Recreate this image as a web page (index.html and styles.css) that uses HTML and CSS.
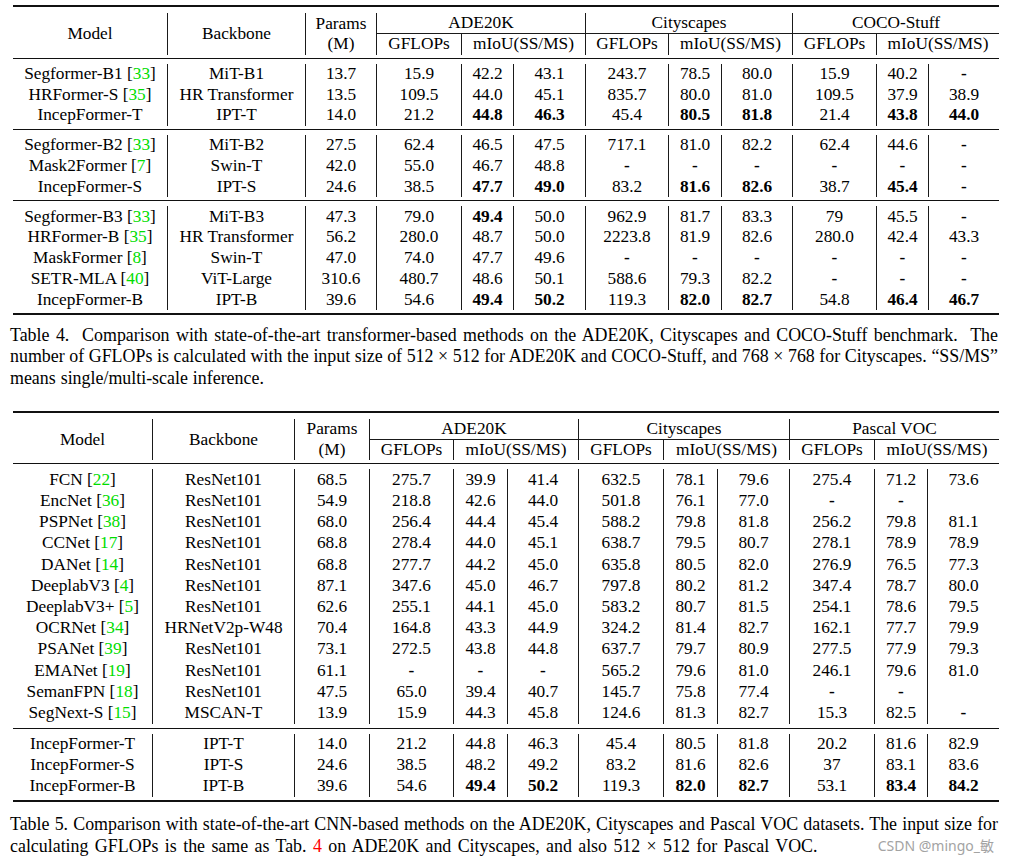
FILE: index.html
```html
<!DOCTYPE html>
<html lang="en">
<head>
<meta charset="utf-8">
<title>IncepFormer comparison tables</title>
<link rel="stylesheet" href="styles.css">
</head>
<body>
<div class="page">

<table class="tbl t4">
  <colgroup>
    <col class="c1"><col class="c2"><col class="c3"><col class="c4"><col class="c5"><col class="c6">
    <col class="c7"><col class="c8"><col class="c9"><col class="c10"><col class="c11"><col class="c12">
  </colgroup>
  <tbody>
    <tr class="rule top"><td colspan="12"><div class="ln thick"></div></td></tr>
    <tr class="hr">
      <th class="first" rowspan="2">Model</th>
      <th rowspan="2">Backbone</th>
      <th>Params</th>
      <th class="grp" colspan="3">ADE20K</th>
      <th class="grp" colspan="3">Cityscapes</th>
      <th class="grp" colspan="3">COCO-Stuff</th>
    </tr>
    <tr class="hr">
      <th>(M)</th>
      <th>GFLOPs</th><th colspan="2">mIoU(SS/MS)</th>
      <th>GFLOPs</th><th colspan="2">mIoU(SS/MS)</th>
      <th>GFLOPs</th><th colspan="2">mIoU(SS/MS)</th>
    </tr>
    <tr class="rule mid"><td colspan="12"><div class="ln"></div></td></tr>

    <tr class="r"><td class="first">Segformer-B1 [<span class="ref">33</span>]</td><td>MiT-B1</td><td>13.7</td><td>15.9</td><td>42.2</td><td>43.1</td><td>243.7</td><td>78.5</td><td>80.0</td><td>15.9</td><td>40.2</td><td class="d">-</td></tr>
    <tr class="r"><td class="first">HRFormer-S [<span class="ref">35</span>]</td><td>HR Transformer</td><td>13.5</td><td>109.5</td><td>44.0</td><td>45.1</td><td>835.7</td><td>80.0</td><td>81.0</td><td>109.5</td><td>37.9</td><td>38.9</td></tr>
    <tr class="r"><td class="first">IncepFormer-T</td><td>IPT-T</td><td>14.0</td><td>21.2</td><td class="b">44.8</td><td class="b">46.3</td><td>45.4</td><td class="b">80.5</td><td class="b">81.8</td><td>21.4</td><td class="b">43.8</td><td class="b">44.0</td></tr>
    <tr class="rule mid"><td colspan="12"><div class="ln"></div></td></tr>

    <tr class="r"><td class="first">Segformer-B2 [<span class="ref">33</span>]</td><td>MiT-B2</td><td>27.5</td><td>62.4</td><td>46.5</td><td>47.5</td><td>717.1</td><td>81.0</td><td>82.2</td><td>62.4</td><td>44.6</td><td class="d">-</td></tr>
    <tr class="r"><td class="first">Mask2Former [<span class="ref">7</span>]</td><td>Swin-T</td><td>42.0</td><td>55.0</td><td>46.7</td><td>48.8</td><td class="d">-</td><td class="d">-</td><td class="d">-</td><td class="d">-</td><td class="d">-</td><td class="d">-</td></tr>
    <tr class="r"><td class="first">IncepFormer-S</td><td>IPT-S</td><td>24.6</td><td>38.5</td><td class="b">47.7</td><td class="b">49.0</td><td>83.2</td><td class="b">81.6</td><td class="b">82.6</td><td>38.7</td><td class="b">45.4</td><td class="d">-</td></tr>
    <tr class="rule mid"><td colspan="12"><div class="ln"></div></td></tr>

    <tr class="r"><td class="first">Segformer-B3 [<span class="ref">33</span>]</td><td>MiT-B3</td><td>47.3</td><td>79.0</td><td class="b">49.4</td><td>50.0</td><td>962.9</td><td>81.7</td><td>83.3</td><td>79</td><td>45.5</td><td class="d">-</td></tr>
    <tr class="r"><td class="first">HRFormer-B [<span class="ref">35</span>]</td><td>HR Transformer</td><td>56.2</td><td>280.0</td><td>48.7</td><td>50.0</td><td>2223.8</td><td>81.9</td><td>82.6</td><td>280.0</td><td>42.4</td><td>43.3</td></tr>
    <tr class="r"><td class="first">MaskFormer [<span class="ref">8</span>]</td><td>Swin-T</td><td>47.0</td><td>74.0</td><td>47.7</td><td>49.6</td><td class="d">-</td><td class="d">-</td><td class="d">-</td><td class="d">-</td><td class="d">-</td><td class="d">-</td></tr>
    <tr class="r"><td class="first">SETR-MLA [<span class="ref">40</span>]</td><td>ViT-Large</td><td>310.6</td><td>480.7</td><td>48.6</td><td>50.1</td><td>588.6</td><td>79.3</td><td>82.2</td><td class="d">-</td><td class="d">-</td><td class="d">-</td></tr>
    <tr class="r"><td class="first">IncepFormer-B</td><td>IPT-B</td><td>39.6</td><td>54.6</td><td class="b">49.4</td><td class="b">50.2</td><td>119.3</td><td class="b">82.0</td><td class="b">82.7</td><td>54.8</td><td class="b">46.4</td><td class="b">46.7</td></tr>
    <tr class="rule bottom"><td colspan="12"><div class="ln thick"></div></td></tr>
  </tbody>
</table>

<p class="caption cap4">
  <span class="jl">Table 4.&nbsp; Comparison with state-of-the-art transformer-based methods on the ADE20K, Cityscapes and COCO-Stuff benchmark.&nbsp; The</span>
  <span class="jl">number of GFLOPs is calculated with the input size of 512 × 512 for ADE20K and COCO-Stuff, and 768 × 768 for Cityscapes. “SS/MS”</span>
  <span class="ll">means single/multi-scale inference.</span>
</p>

<table class="tbl t5">
  <colgroup>
    <col class="c1"><col class="c2"><col class="c3"><col class="c4"><col class="c5"><col class="c6">
    <col class="c7"><col class="c8"><col class="c9"><col class="c10"><col class="c11"><col class="c12">
  </colgroup>
  <tbody>
    <tr class="rule top"><td colspan="12"><div class="ln thick"></div></td></tr>
    <tr class="hr">
      <th class="first" rowspan="2">Model</th>
      <th rowspan="2">Backbone</th>
      <th>Params</th>
      <th class="grp" colspan="3">ADE20K</th>
      <th class="grp" colspan="3">Cityscapes</th>
      <th class="grp" colspan="3">Pascal VOC</th>
    </tr>
    <tr class="hr">
      <th>(M)</th>
      <th>GFLOPs</th><th colspan="2">mIoU(SS/MS)</th>
      <th>GFLOPs</th><th colspan="2">mIoU(SS/MS)</th>
      <th>GFLOPs</th><th colspan="2">mIoU(SS/MS)</th>
    </tr>
    <tr class="rule mid"><td colspan="12"><div class="ln"></div></td></tr>

    <tr class="r"><td class="first">FCN [<span class="ref">22</span>]</td><td>ResNet101</td><td>68.5</td><td>275.7</td><td>39.9</td><td>41.4</td><td>632.5</td><td>78.1</td><td>79.6</td><td>275.4</td><td>71.2</td><td>73.6</td></tr>
    <tr class="r"><td class="first">EncNet [<span class="ref">36</span>]</td><td>ResNet101</td><td>54.9</td><td>218.8</td><td>42.6</td><td>44.0</td><td>501.8</td><td>76.1</td><td>77.0</td><td class="d">-</td><td class="d">-</td><td></td></tr>
    <tr class="r"><td class="first">PSPNet [<span class="ref">38</span>]</td><td>ResNet101</td><td>68.0</td><td>256.4</td><td>44.4</td><td>45.4</td><td>588.2</td><td>79.8</td><td>81.8</td><td>256.2</td><td>79.8</td><td>81.1</td></tr>
    <tr class="r"><td class="first">CCNet [<span class="ref">17</span>]</td><td>ResNet101</td><td>68.8</td><td>278.4</td><td>44.0</td><td>45.1</td><td>638.7</td><td>79.5</td><td>80.7</td><td>278.1</td><td>78.9</td><td>78.9</td></tr>
    <tr class="r"><td class="first">DANet [<span class="ref">14</span>]</td><td>ResNet101</td><td>68.8</td><td>277.7</td><td>44.2</td><td>45.0</td><td>635.8</td><td>80.5</td><td>82.0</td><td>276.9</td><td>76.5</td><td>77.3</td></tr>
    <tr class="r"><td class="first">DeeplabV3 [<span class="ref">4</span>]</td><td>ResNet101</td><td>87.1</td><td>347.6</td><td>45.0</td><td>46.7</td><td>797.8</td><td>80.2</td><td>81.2</td><td>347.4</td><td>78.7</td><td>80.0</td></tr>
    <tr class="r"><td class="first">DeeplabV3+ [<span class="ref">5</span>]</td><td>ResNet101</td><td>62.6</td><td>255.1</td><td>44.1</td><td>45.0</td><td>583.2</td><td>80.7</td><td>81.5</td><td>254.1</td><td>78.6</td><td>79.5</td></tr>
    <tr class="r"><td class="first">OCRNet [<span class="ref">34</span>]</td><td>HRNetV2p-W48</td><td>70.4</td><td>164.8</td><td>43.3</td><td>44.9</td><td>324.2</td><td>81.4</td><td>82.7</td><td>162.1</td><td>77.7</td><td>79.9</td></tr>
    <tr class="r"><td class="first">PSANet [<span class="ref">39</span>]</td><td>ResNet101</td><td>73.1</td><td>272.5</td><td>43.8</td><td>44.8</td><td>637.7</td><td>79.7</td><td>80.9</td><td>277.5</td><td>77.9</td><td>79.3</td></tr>
    <tr class="r"><td class="first">EMANet [<span class="ref">19</span>]</td><td>ResNet101</td><td>61.1</td><td class="d">-</td><td class="d">-</td><td class="d">-</td><td>565.2</td><td>79.6</td><td>81.0</td><td>246.1</td><td>79.6</td><td>81.0</td></tr>
    <tr class="r"><td class="first">SemanFPN [<span class="ref">18</span>]</td><td>ResNet101</td><td>47.5</td><td>65.0</td><td>39.4</td><td>40.7</td><td>145.7</td><td>75.8</td><td>77.4</td><td class="d">-</td><td class="d">-</td><td></td></tr>
    <tr class="r"><td class="first">SegNext-S [<span class="ref">15</span>]</td><td>MSCAN-T</td><td>13.9</td><td>15.9</td><td>44.3</td><td>45.8</td><td>124.6</td><td>81.3</td><td>82.7</td><td>15.3</td><td>82.5</td><td class="d">-</td></tr>
    <tr class="rule grpr"><td colspan="12"><div class="ln"></div></td></tr>

    <tr class="r r2"><td class="first">IncepFormer-T</td><td>IPT-T</td><td>14.0</td><td>21.2</td><td>44.8</td><td>46.3</td><td>45.4</td><td>80.5</td><td>81.8</td><td>20.2</td><td>81.6</td><td>82.9</td></tr>
    <tr class="r r2"><td class="first">IncepFormer-S</td><td>IPT-S</td><td>24.6</td><td>38.5</td><td>48.2</td><td>49.2</td><td>83.2</td><td>81.6</td><td>82.6</td><td>37</td><td>83.1</td><td>83.6</td></tr>
    <tr class="r r2"><td class="first">IncepFormer-B</td><td>IPT-B</td><td>39.6</td><td>54.6</td><td class="b">49.4</td><td class="b">50.2</td><td>119.3</td><td class="b">82.0</td><td class="b">82.7</td><td>53.1</td><td class="b">83.4</td><td class="b">84.2</td></tr>
    <tr class="rule bottom"><td colspan="12"><div class="ln thick"></div></td></tr>
  </tbody>
</table>

<p class="caption cap5">
  <span class="jl">Table 5. Comparison with state-of-the-art CNN-based methods on the ADE20K, Cityscapes and Pascal VOC datasets. The input size for</span>
  <span class="ll">calculating GFLOPs is the same as Tab. <span class="xref">4</span> on ADE20K and Cityscapes, and also 512 × 512 for Pascal VOC.</span>
  <span class="watermark">CSDN @mingo_敏</span>
</p>

</div>
</body>
</html>
```

FILE: styles.css
```css
* {
  box-sizing: border-box;
}

html, body {
  margin: 0;
  padding: 0;
  background: #ffffff;
}

body {
  font-family: "Liberation Serif", "Times New Roman", serif;
  color: #000000;
}

.page {
  width: 1010px;
  padding: 5px 12px 0 10px;
}

/* ---------- tables ---------- */

.tbl {
  margin-left: 3px;
  width: 986px;
  table-layout: fixed;
  border-collapse: separate;
  border-spacing: 0;
  font-size: 17.3px;
}

.tbl th,
.tbl td {
  padding: 0;
  text-align: center;
  vertical-align: middle;
  white-space: nowrap;
  line-height: 20px;
  font-weight: normal;
  border-left: 1px solid #1a1a1a;
}

.tbl th.first,
.tbl td.first {
  border-left: none;
}

.tbl .hr th {
  height: 20.5px;
}

.tbl .hr th.grp {
  border-bottom: 1px solid #1a1a1a;
}

.tbl .r td {
  height: 20.8px;
}

.t5 .r td {
  height: 21.2px;
}

.t5 .r.r2 td {
  height: 21px;
}

.tbl td.b {
  font-weight: bold;
}

.tbl td.d {
  font-weight: bold;
}

.ref {
  color: #00dd00;
}

.xref {
  color: #ff0000;
}

/* rule rows (booktabs-like) */
.tbl .rule td {
  border-left: none;
  height: auto;
  line-height: 0;
  padding: 3px 0 5px 0;
}

.tbl .rule.top td {
  padding: 0 0 6px 0;
}

.tbl .rule.bottom td {
  padding: 3px 0 0 0;
}

.t5 .rule.grpr td {
  padding: 4px 0 5px 0;
}

.t5 .rule.bottom td {
  padding: 3.5px 0 0 0;
}

.ln {
  height: 1px;
  background: #111111;
}

.ln.thick {
  height: 2px;
}

/* column widths: table 4 */
.t4 .c1 { width: 154px; }
.t4 .c2 { width: 138px; }
.t4 .c3 { width: 71px; }
.t4 .c4 { width: 85px; }
.t4 .c5 { width: 52px; }
.t4 .c6 { width: 72px; }
.t4 .c7 { width: 83px; }
.t4 .c8 { width: 53px; }
.t4 .c9 { width: 71px; }
.t4 .c10 { width: 84px; }
.t4 .c11 { width: 52px; }
.t4 .c12 { width: 71px; }

/* column widths: table 5 */
.t5 .c1 { width: 139px; }
.t5 .c2 { width: 142px; }
.t5 .c3 { width: 75px; }
.t5 .c4 { width: 84px; }
.t5 .c5 { width: 54px; }
.t5 .c6 { width: 71px; }
.t5 .c7 { width: 85px; }
.t5 .c8 { width: 54px; }
.t5 .c9 { width: 72px; }
.t5 .c10 { width: 85px; }
.t5 .c11 { width: 53px; }
.t5 .c12 { width: 72px; }

.t5 {
  margin-top: 21.5px;
}

/* ---------- captions ---------- */

.caption {
  position: relative;
  width: 988px;
  margin: 0;
  font-size: 17.9px;
  line-height: 21.5px;
}

.cap4 {
  margin-top: 9.5px;
}

.cap5 {
  margin-top: 12px;
}

.jl {
  display: block;
  text-align: justify;
  text-align-last: justify;
}

.ll {
  display: block;
  text-align: left;
  word-spacing: 0.5px;
}

.cap5 .ll {
  word-spacing: 1.9px;
}

.watermark {
  position: absolute;
  right: 4px;
  bottom: 1px;
  font-family: "Noto Sans", "Noto Sans CJK SC", sans-serif;
  font-size: 14px;
  line-height: 21px;
  color: #a3a3a3;
  white-space: nowrap;
  word-spacing: 0;
}
```
